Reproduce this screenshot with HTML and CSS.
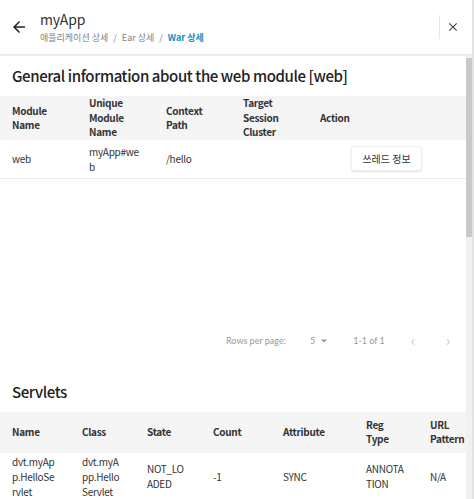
FILE: index.html
```html
<!DOCTYPE html>
<html>
	<head>
		<meta charset="UTF-8">
		<title>War 상세 - myApp</title>
		<link rel="stylesheet" href="styles.css">
	</head>
	<body>
		<div class="dialog">
			<div class="dialog-head">
				<button class="icon-btn back">
					<svg width="18" height="18" viewBox="0 0 24 24"><path d="M20 11H7.83l5.59-5.59L12 4l-8 8 8 8 1.41-1.41L7.83 13H20v-2z" fill="#222"/></svg>
				</button>
				<div class="head-title">
					<p class="app-name">myApp</p>
					<p class="crumbs">애플리케이션 상세 <i>/</i> Ear 상세 <i>/</i> <b>War 상세</b></p>
				</div>
				<span class="head-sep"></span>
				<button class="icon-btn close">
					<svg width="14" height="14" viewBox="0 0 24 24"><path d="M19 6.41L17.59 5 12 10.59 6.41 5 5 6.41 10.59 12 5 17.59 6.41 19 12 13.41 17.59 19 19 17.59 13.41 12z" fill="#444"/></svg>
				</button>
			</div>
			<div class="dialog-body">
				<div class="scroll-content">
					<h2 class="sec-title">General information about the web module [web]</h2>
					<table class="grid module-grid">
						<thead>
							<tr><th>Module Name</th><th>Unique Module Name</th><th>Context Path</th><th>Target Session Cluster</th><th>Action</th></tr>
						</thead>
						<tbody>
							<tr><td>web</td><td>myApp#web</td><td>/hello</td><td></td><td class="act"><button class="thread-btn">쓰레드 정보</button></td></tr>
						</tbody>
					</table>
					<div class="pager">
						<span>Rows per page:</span>
						<span class="rows">5 <svg width="8" height="8" viewBox="0 0 10 10"><path d="M1 3h8L5 7z" fill="#999"/></svg></span>
						<span class="range">1-1 of 1</span>
						<span class="arrow">&lsaquo;</span>
						<span class="arrow">&rsaquo;</span>
					</div>
					<h2 class="sec-title servlet-title">Servlets</h2>
					<table class="grid servlet-grid">
						<thead>
							<tr><th>Name</th><th>Class</th><th>State</th><th>Count</th><th>Attribute</th><th>Reg Type</th><th>URL Pattern</th></tr>
						</thead>
						<tbody>
							<tr><td>dvt.myApp.HelloServlet</td><td>dvt.myApp.HelloServlet</td><td>NOT_LOADED</td><td>-1</td><td>SYNC</td><td>ANNOTATION</td><td>N/A</td></tr>
						</tbody>
					</table>
				</div>
				<div class="scrollbar"><div class="thumb"></div></div>
			</div>
		</div>
	</body>
</html>
```

FILE: styles.css
```css
*{margin:0;padding:0;box-sizing:border-box;}
body{
	width:474px;
	height:499px;
	overflow:hidden;
	background:#fff;
	font-family:"Noto Sans CJK KR","Noto Sans",sans-serif;
	color:#333;
}
.dialog{
	height:499px;
	display:flex;
	flex-direction:column;
	border-right:2px solid #e4e4e4;
}
.dialog-head{
	height:56px;
	flex:none;
	display:flex;
	align-items:center;
	padding:0 0 0 9px;
	border-bottom:2px solid #ececec;
}
.icon-btn{
	border:0;
	background:none;
	display:flex;
	align-items:center;
	justify-content:center;
}
.back{width:20px;height:20px;}
.head-title{
	flex:1;
	padding-left:11px;
}
.app-name{
	font-size:14px;
	line-height:18px;
	letter-spacing:-.2px;
	color:#333;
}
.crumbs{
	font-size:9px;
	line-height:13px;
	margin-top:3px;
	color:#808080;
}
.crumbs i{font-style:normal;margin:0 3px;}
.crumbs b{color:#1a8bbf;font-weight:700;}
.head-sep{
	width:1px;
	height:24px;
	background:#e6e6e6;
	margin-right:6px;
}
.close{width:14px;height:14px;margin-right:12px;}
.dialog-body{
	flex:1;
	display:flex;
	overflow:hidden;
}
.scroll-content{flex:1;}
.scrollbar{
	width:6px;
	flex:none;
	background:#f1f1f1;
	padding-top:2px;
}
.thumb{height:179px;background:#c9c9c9;}
.sec-title{
	font-size:15px;
	font-weight:500;
	letter-spacing:-.4px;
	color:#222;
	padding:9px 12px 0;
	height:40px;
	line-height:22px;
}
.grid{
	width:100%;
	border-collapse:collapse;
	table-layout:fixed;
	font-size:10px;
	letter-spacing:-.3px;
}
.grid th{
	background:#f5f5f5;
	font-weight:700;
	text-align:left;
	line-height:14.5px;
	padding:0 4px 0 12px;
	color:#333;
}
.grid td{
	line-height:15px;
	padding:0 4px 0 12px;
	color:#333;
	word-break:break-all;
	border-bottom:1px solid #ececec;
}
.module-grid th{height:44px;padding-right:14px;}
.module-grid td{height:38px;}
.module-grid th:nth-child(-n+4){width:77px;}
.module-grid td:nth-child(2){padding-right:15px;}
.act{padding-left:43px !important;}
.thread-btn{
	font-family:inherit;
	font-size:10px;
	color:#333;
	background:#fff;
	border:1px solid #eee;
	border-radius:3px;
	box-shadow:0 1px 2px rgba(0,0,0,.12);
	width:71px;
	height:25px;
}
.pager{
	height:191px;
	display:flex;
	align-items:flex-start;
	padding:155px 0 0 226px;
	line-height:14px;
	font-family:Lato,"Noto Sans",sans-serif;
	font-size:9px;
	color:#999;
}
.rows{margin-left:24px;display:flex;align-items:center;gap:5px;}
.range{margin-left:25px;}
.arrow{font-size:15px;line-height:12px;color:#c8c8c8;margin-left:26px;}
.arrow:last-child{margin-left:31px;}
.servlet-title{height:42px;padding-top:11px;}
.servlet-grid th{height:41px;}
.servlet-grid td{height:48px;}
.servlet-grid th:nth-child(1){width:70px;}
.servlet-grid th:nth-child(2){width:65px;}
.servlet-grid th:nth-child(3){width:66px;}
.servlet-grid th:nth-child(4){width:70px;}
.servlet-grid th:nth-child(5){width:83px;}
.servlet-grid th:nth-child(6){width:64px;}
.servlet-grid td:nth-child(1){padding-right:14px;}
.servlet-grid td:nth-child(2){padding-right:14px;}
.servlet-grid td:nth-child(3){padding-right:16px;}
.servlet-grid th:nth-child(6),.servlet-grid td:nth-child(6){padding-right:14px;}
.servlet-grid th:nth-child(7),.servlet-grid td:nth-child(7){padding:0 0 0 12px;}
```
